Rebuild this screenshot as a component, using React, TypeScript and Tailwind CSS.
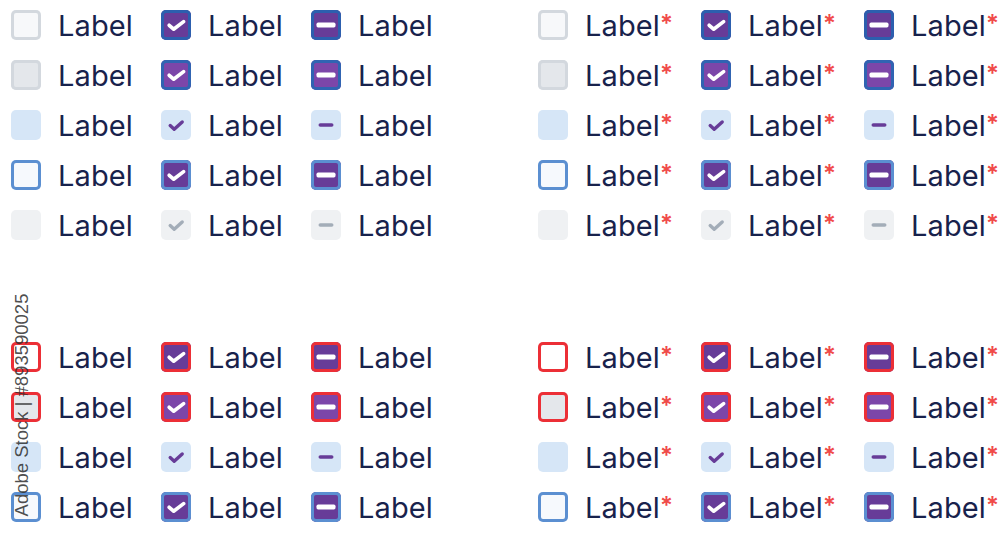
import React from "react";

type State = "default" | "hover" | "pressed" | "focus" | "disabled" | "error" | "errorHover";
type Kind = "none" | "check" | "minus";

const boxClass: Record<string, Record<State, string>> = {
  none: {
    default: "bg-[#f7f8fa] shadow-[inset_0_0_0_3px_#d3d8de]",
    hover: "bg-[#e4e7eb] shadow-[inset_0_0_0_3px_#d3d8de]",
    pressed: "bg-[#d6e6f7]",
    focus: "bg-[#f6f9fd] shadow-[inset_0_0_0_3px_#5b8fd1]",
    disabled: "bg-[#eff1f3]",
    error: "bg-white shadow-[inset_0_0_0_3px_#ec2f36]",
    errorHover: "bg-[#e4e7eb] shadow-[inset_0_0_0_3px_#ec2f36]",
  },
  filled: {
    default: "bg-[#673c98] shadow-[inset_0_0_0_3px_#2c5fae]",
    hover: "bg-[#7c46a9] shadow-[inset_0_0_0_3px_#3064b2]",
    pressed: "bg-[#d6e6f7]",
    focus: "bg-[#673c98] shadow-[inset_0_0_0_3px_#5b8fd1]",
    disabled: "bg-[#eff1f3]",
    error: "bg-[#673c98] shadow-[inset_0_0_0_3px_#ec2f36]",
    errorHover: "bg-[#7c46a9] shadow-[inset_0_0_0_3px_#ec2f36]",
  },
};

function Icon({ kind, state }: { kind: Kind; state: State }) {
  if (kind === "none") return null;
  const light = state === "pressed" || state === "disabled";
  const color = state === "pressed" ? "#673c98" : state === "disabled" ? "#a3adb8" : "#ffffff";
  if (kind === "check") {
    return (
      <svg width="30" height="30" viewBox="0 0 30 30" className="absolute inset-0">
        {light ? (
          <path d="M9.2 15.6 L13.2 19.2 L21.2 12" fill="none" stroke={color} strokeWidth="3.4" strokeLinecap="round" strokeLinejoin="round" />
        ) : (
          <path d="M8.2 15.3 L12.6 19.2 L22.6 11.6" fill="none" stroke={color} strokeWidth="3.7" strokeLinecap="round" strokeLinejoin="round" />
        )}
      </svg>
    );
  }
  return (
    <svg width="30" height="30" viewBox="0 0 30 30" className="absolute inset-0">
      {light ? (
        <rect x="7.5" y="13.2" width="15" height="3.6" rx="1.8" fill={color} />
      ) : (
        <rect x="5.5" y="12.6" width="19" height="4.8" rx="1.6" fill={color} />
      )}
    </svg>
  );
}

function Box({ kind, state }: { kind: Kind; state: State }) {
  const cls = boxClass[kind === "none" ? "none" : "filled"][state];
  return (
    <div className={`relative w-[30px] h-[30px] rounded-[5px] shrink-0 ${cls}`}>
      <Icon kind={kind} state={state} />
    </div>
  );
}

function Item({ kind, state, required }: { kind: Kind; state: State; required?: boolean }) {
  return (
    <div className="flex items-center h-[50px]">
      <Box kind={kind} state={state} />
      <span className="ml-[17px] text-[29px] leading-none text-[#18224c] tracking-[0.1px] mt-[1px]">
        Label
        {required && <span className="relative -top-[4px] text-[24px] font-semibold text-[#f04a4a]">*</span>}
      </span>
    </div>
  );
}

const kinds: Kind[] = ["none", "check", "minus"];

function Group({ states, required }: { states: State[]; required?: boolean }) {
  return (
    <div className={`grid ${required ? "grid-cols-[163px_163px_136px]" : "grid-cols-[150px_150px_150px]"}`}>
      {states.map((s) =>
        kinds.map((k) => <Item key={s + k} kind={k} state={s} required={required} />)
      )}
    </div>
  );
}

export default function App() {
  const top: State[] = ["default", "hover", "pressed", "focus", "disabled"];
  const bottom: State[] = ["error", "errorHover", "pressed", "focus"];
  return (
    <div
      className="relative w-[1000px] h-[533px] overflow-hidden bg-white"
      style={{ fontFamily: "Inter, 'Noto Sans', sans-serif" }}
    >
      <div className="flex flex-col">
        <div className="flex pl-[11px]">
          <Group states={top} />
          <div className="ml-[77px]">
            <Group states={top} required />
          </div>
        </div>
        <div className="flex pl-[11px] mt-[82px]">
          <Group states={bottom} />
          <div className="ml-[77px]">
            <Group states={bottom} required />
          </div>
        </div>
      </div>
      <div className="absolute left-[22px] top-[405px] w-0 h-0">
        <div
          className="absolute -translate-x-1/2 -translate-y-1/2 -rotate-90 whitespace-nowrap text-[18.5px] leading-none text-[#2f2f2f]/85"
          style={{ fontFamily: "'Liberation Sans', Arial, sans-serif" }}
        >
          Adobe Stock | #893590025
        </div>
      </div>
    </div>
  );
}
